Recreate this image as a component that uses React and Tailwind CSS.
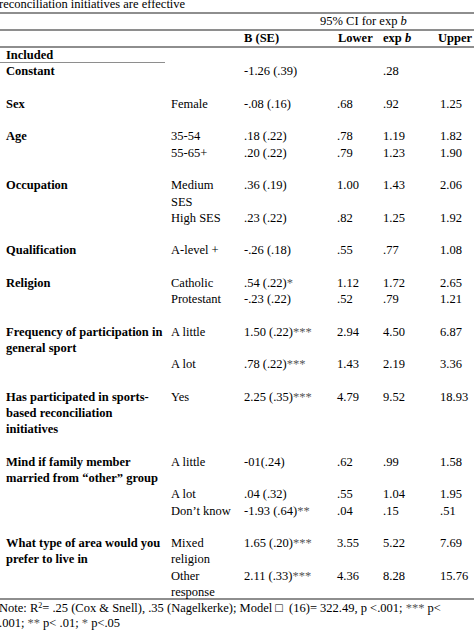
import React from 'react';

const groups = [
    { label: ['Sex'], rows: [{ c: ['Female'], b: '-.08 (.16)', lo: '.68', e: '.92', up: '1.25' }] },
    {
        label: ['Age'], rows: [
            { c: ['35-54'], b: '.18 (.22)', lo: '.78', e: '1.19', up: '1.82' },
            { c: ['55-65+'], b: '.20 (.22)', lo: '.79', e: '1.23', up: '1.90' },
        ]
    },
    {
        label: ['Occupation'], rows: [
            { c: ['Medium', 'SES'], b: '.36 (.19)', lo: '1.00', e: '1.43', up: '2.06' },
            { c: ['High SES'], b: '.23 (.22)', lo: '.82', e: '1.25', up: '1.92' },
        ]
    },
    { label: ['Qualification'], rows: [{ c: ['A-level +'], b: '-.26 (.18)', lo: '.55', e: '.77', up: '1.08' }] },
    {
        label: ['Religion'], rows: [
            { c: ['Catholic'], b: '.54 (.22)*', lo: '1.12', e: '1.72', up: '2.65' },
            { c: ['Protestant'], b: '-.23 (.22)', lo: '.52', e: '.79', up: '1.21' },
        ]
    },
    {
        label: ['Frequency of participation in', 'general sport'], rows: [
            { c: ['A little'], b: '1.50 (.22)***', lo: '2.94', e: '4.50', up: '6.87', span: 2 },
            { c: ['A lot'], b: '.78 (.22)***', lo: '1.43', e: '2.19', up: '3.36' },
        ]
    },
    {
        label: ['Has participated in sports-', 'based reconciliation', 'initiatives'], rows: [
            { c: ['Yes'], b: '2.25 (.35)***', lo: '4.79', e: '9.52', up: '18.93' },
        ]
    },
    {
        label: ['Mind if family member', 'married from \u201cother\u201d group'], rows: [
            { c: ['A little'], b: '-01(.24)', lo: '.62', e: '.99', up: '1.58', span: 2 },
            { c: ['A lot'], b: '.04 (.32)', lo: '.55', e: '1.04', up: '1.95' },
            { c: ['Don\u2019t know'], b: '-1.93 (.64)**', lo: '.04', e: '.15', up: '.51' },
        ]
    },
    {
        label: ['What type of area would you', 'prefer to live in'], rows: [
            { c: ['Mixed', 'religion'], b: '1.65 (.20)***', lo: '3.55', e: '5.22', up: '7.69' },
            { c: ['Other', 'response'], b: '2.11 (.33)***', lo: '4.36', e: '8.28', up: '15.76' },
        ]
    },
];

// stars print lighter in the scan
const Coef = ({ text }) => {
    const i = text.indexOf('*');
    if (i < 0) return <span>{text}</span>;
    return (
        <span>
            {text.slice(0, i)}
            <span className="text-[#555]">{text.slice(i)}</span>
        </span>
    );
};

const Rule = () => <div className="h-[2px] bg-[#8e8e8e]" />;

const App = () => {
    return (
        <div className="w-[474px] h-[630px] overflow-hidden bg-white text-black text-[12.5px] font-['Liberation_Serif',serif]">
            {/* caption, cut at the top */}
            <div className="-mt-[4px] h-[16px] leading-[16px] -ml-[1px] whitespace-nowrap">
                reconciliation initiatives are effective
            </div>
            <Rule />
            <div className="h-[15px] leading-[15px] pl-[320px]">
                95% CI for exp <i>b</i>
            </div>
            <Rule />
            <div className="grid grid-cols-[244px_94px_45px_55px_1fr] h-[15px] leading-[15px] font-bold whitespace-nowrap">
                <div />
                <div>B (SE)</div>
                <div>Lower</div>
                <div>exp <i>b</i></div>
                <div>Upper</div>
            </div>
            <Rule />
            <div className="h-[14px] leading-[14px] pl-[6px] font-bold">Included</div>
            <div className="h-[1px] w-[165px] bg-[#8e8e8e]" />
            <div className="grid grid-cols-[244px_139px_1fr] h-[16px] leading-[16px]">
                <div className="pl-[6px] font-bold">Constant</div>
                <div>-1.26 (.39)</div>
                <div>.28</div>
            </div>

            <div className="mt-[17px] flex flex-col gap-[16.2px] leading-[16.3px]">
                {groups.map((g, gi) => (
                    <div key={gi} className="flex">
                        <div className="w-[171px] shrink-0 pl-[6px] font-bold whitespace-nowrap">
                            {g.label.map((l, li) => <div key={li}>{l}</div>)}
                        </div>
                        <div className="flex-1 flex flex-col">
                            {g.rows.map((r, ri) => (
                                <div
                                    key={ri}
                                    className={`grid grid-cols-[73px_93px_46px_57px_1fr] whitespace-nowrap ${r.span === 2 ? 'h-[32.6px]' : ''}`}
                                >
                                    <div>{r.c.map((c, ci) => <div key={ci}>{c}</div>)}</div>
                                    <div><Coef text={r.b} /></div>
                                    <div>{r.lo}</div>
                                    <div>{r.e}</div>
                                    <div>{r.up}</div>
                                </div>
                            ))}
                        </div>
                    </div>
                ))}
            </div>

            <div className="mt-[-2px]">
                <Rule />
            </div>
            <div className="-ml-[1px] leading-[15px] pt-[1px] whitespace-nowrap">
                <div>
                    Note: R<sup className="text-[8px]">2</sup>= .25 (Cox &amp; Snell), .35 (Nagelkerke); Model {'\u25A1'}&nbsp; (16)= 322.49, p &lt;.001; <span className="text-[#555]">***</span> p&lt;
                </div>
                <div>
                    .001; <span className="text-[#555]">**</span> p&lt; .01; <span className="text-[#555]">*</span> p&lt;.05
                </div>
            </div>
        </div>
    );
};

export default App;
